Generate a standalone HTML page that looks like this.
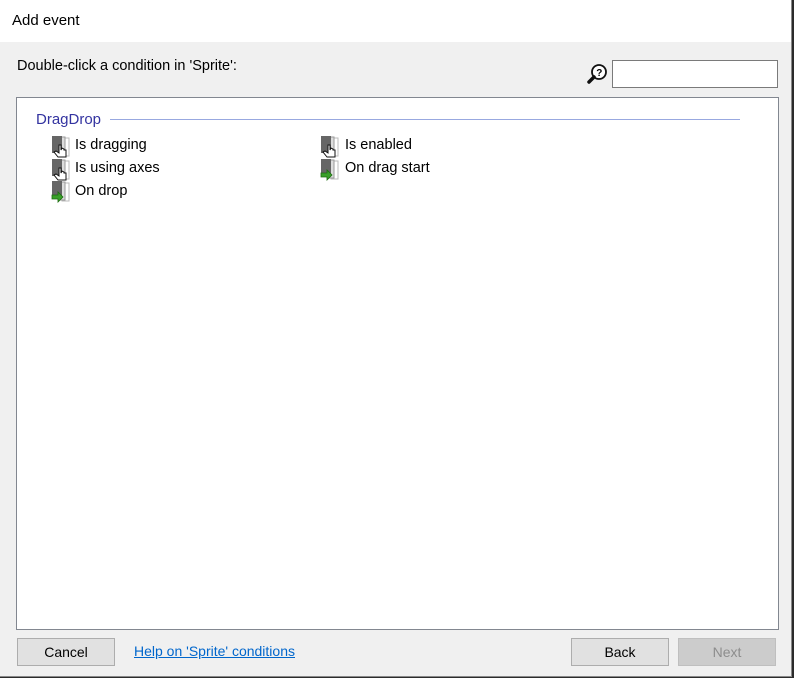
<!DOCTYPE html>
<html><head><meta charset="utf-8"><style>
*{margin:0;padding:0;box-sizing:border-box}
body{width:794px;height:678px;overflow:hidden;background:#2b2b2b;font-family:"Liberation Sans",sans-serif;font-size:14px;color:#000;position:relative}
.win{position:absolute;left:0;top:0;width:792px;height:677px;background:#f0f0f0;border-right:1px solid #888;border-bottom:1px solid #888}
.title{position:absolute;left:0;top:0;width:791px;height:42px;background:#fff}
.abs{position:absolute;white-space:nowrap}
.list{position:absolute;left:16px;top:97px;width:763px;height:533px;background:#fff;border:1px solid #828790}
.btn{position:absolute;top:638px;width:98px;height:28px;background:#e1e1e1;border:1px solid #adadad;text-align:center;line-height:26px}
.ic{position:absolute;width:20px;height:22px}
</style></head><body>
<div class="win">
<div class="title"><div class="abs" style="left:12px;top:12px;font-size:15px">Add event</div></div>
<div class="abs" style="left:17px;top:58px;font-size:14.5px">Double-click a condition in 'Sprite':</div>
<svg class="abs" style="left:587px;top:63px" width="22" height="22" viewBox="0 0 22 22"><circle cx="12" cy="9" r="7" fill="#fff" stroke="#111" stroke-width="1.8"/><path d="M7 14 L2 19" stroke="#111" stroke-width="3.5" stroke-linecap="round"/><text x="9.2" y="13" font-size="10" font-family="Liberation Sans" font-weight="bold">?</text></svg>
<div class="abs" style="left:612px;top:60px;width:166px;height:28px;background:#fff;border:1px solid #7a7a7a"></div>
<div class="list">
<div class="abs" style="left:19px;top:13px;color:#3333a0;font-size:15px">DragDrop</div>
<div class="abs" style="left:93px;top:21px;width:630px;height:1px;background:#98a8e0"></div>
</div>
<svg class="ic" style="left:51px;top:136px" viewBox="0 0 20 22"><rect x="11" y="2" width="7" height="18" fill="#fff" stroke="#bbb"/><rect x="7" y="1" width="7" height="18" fill="#ddd" stroke="#999"/><rect x="1" y="0" width="10" height="17" fill="#666"/><path d="M7 21 L3 16 L5 15 L8 17 L8 9 L10 9 L10 14 L11 12 L13 13 L13 14 L15 14 L15 21 Z" fill="#fff" stroke="#111"/></svg>
<svg class="ic" style="left:51px;top:159px" viewBox="0 0 20 22"><rect x="11" y="2" width="7" height="18" fill="#fff" stroke="#bbb"/><rect x="7" y="1" width="7" height="18" fill="#ddd" stroke="#999"/><rect x="1" y="0" width="10" height="17" fill="#666"/><path d="M7 21 L3 16 L5 15 L8 17 L8 9 L10 9 L10 14 L11 12 L13 13 L13 14 L15 14 L15 21 Z" fill="#fff" stroke="#111"/></svg>
<svg class="ic" style="left:51px;top:181px" viewBox="0 0 20 22"><rect x="11" y="2" width="7" height="18" fill="#fff" stroke="#bbb"/><rect x="7" y="1" width="7" height="18" fill="#ddd" stroke="#999"/><rect x="1" y="0" width="10" height="17" fill="#666"/><path d="M1 14 L7 14 L7 11 L12 16 L7 21 L7 18 L1 18 Z" fill="#3aa02a" stroke="#1d6d10" stroke-width=".8"/></svg>
<svg class="ic" style="left:320px;top:136px" viewBox="0 0 20 22"><rect x="11" y="2" width="7" height="18" fill="#fff" stroke="#bbb"/><rect x="7" y="1" width="7" height="18" fill="#ddd" stroke="#999"/><rect x="1" y="0" width="10" height="17" fill="#666"/><path d="M7 21 L3 16 L5 15 L8 17 L8 9 L10 9 L10 14 L11 12 L13 13 L13 14 L15 14 L15 21 Z" fill="#fff" stroke="#111"/></svg>
<svg class="ic" style="left:320px;top:159px" viewBox="0 0 20 22"><rect x="11" y="2" width="7" height="18" fill="#fff" stroke="#bbb"/><rect x="7" y="1" width="7" height="18" fill="#ddd" stroke="#999"/><rect x="1" y="0" width="10" height="17" fill="#666"/><path d="M1 14 L7 14 L7 11 L12 16 L7 21 L7 18 L1 18 Z" fill="#3aa02a" stroke="#1d6d10" stroke-width=".8"/></svg>
<div class="abs" style="left:75px;top:137px;font-size:14.5px">Is dragging</div>
<div class="abs" style="left:75px;top:160px;font-size:14.5px">Is using axes</div>
<div class="abs" style="left:75px;top:183px;font-size:14.5px">On drop</div>
<div class="abs" style="left:345px;top:137px;font-size:14.5px">Is enabled</div>
<div class="abs" style="left:345px;top:160px;font-size:14.5px">On drag start</div>
<div class="btn" style="left:17px">Cancel</div>
<div class="abs" style="left:134px;top:643px;color:#0066cc;text-decoration:underline">Help on 'Sprite' conditions</div>
<div class="btn" style="left:571px">Back</div>
<div class="btn" style="left:678px;background:#cccccc;border-color:#bfbfbf;color:#8d8d8d">Next</div>
</div>
</body></html>
